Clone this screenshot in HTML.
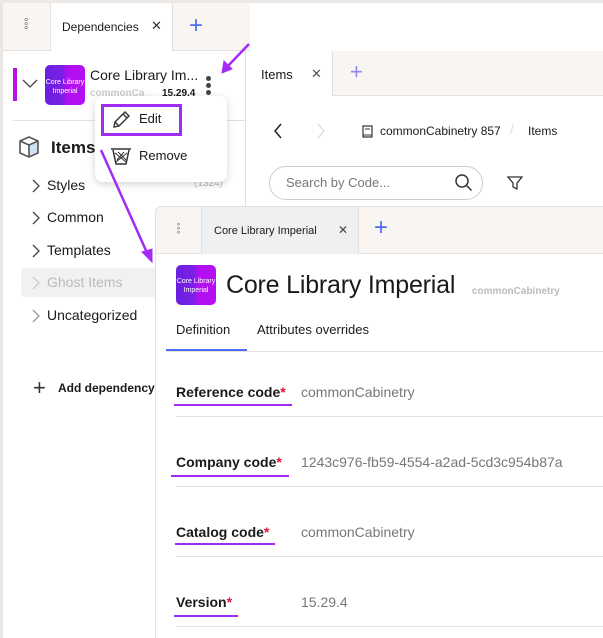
<!DOCTYPE html>
<html><head><style>
*{box-sizing:border-box;margin:0;padding:0}
body{width:603px;height:638px;overflow:hidden;background:#fff;font-family:"Liberation Sans",sans-serif;color:#1a1a1a;position:relative}
.a{position:absolute}
.tabbar{background:#f8f5f2;border-bottom:1px solid #e6dfda}
</style></head><body>
<div class="a" style="left:0;top:0;width:603px;height:3px;background:#ebe8e6"></div>
<div class="a tabbar" style="left:0;top:3px;width:250px;height:48px"></div>
<div class="a" style="left:0;top:3px;width:3px;height:635px;background:#e9e6e4"></div>
<div class="a" style="left:23px;top:19px;font-size:10px;line-height:4px;color:#666">∘<br>∘<br>∘</div>
<div class="a" style="left:50px;top:3px;width:123px;height:48px;background:#fff;border-left:1px solid #e6dfda;border-right:1px solid #e6dfda"></div>
<div class="a" style="left:62px;top:20px;font-size:12px">Dependencies</div>
<div class="a" style="left:151px;top:18px;font-size:13px;color:#333">✕</div>
<div class="a" style="left:189px;top:12px;font-size:24px;color:#4f6cf5;font-weight:300">+</div>
<div class="a" style="left:13px;top:68px;width:4px;height:33px;background:#b513e8"></div>
<svg class="a" style="left:22px;top:79px" width="16" height="10"><path d="M1 1l7 7 7-7" fill="none" stroke="#444" stroke-width="1.3"/></svg>
<div class="a" style="left:45px;top:65px;width:40px;height:40px;border-radius:5px;background:linear-gradient(90deg,#6a1fe0 0%,#7b20e6 45%,#b10ef2 55%,#b511f0 100%);color:#fff;font-size:7px;text-align:center;padding-top:13px;line-height:9px">Core Library<br>Imperial</div>
<div class="a" style="left:90px;top:67px;font-size:14px">Core Library Im...</div>
<div class="a" style="left:90px;top:88px;font-size:10px;color:#ccc;font-weight:bold">commonCa</div>
<div class="a" style="left:162px;top:88px;font-size:10px;font-weight:bold">15.29.4</div>
<div class="a" style="left:206px;top:76px;width:5px;height:5px;border-radius:50%;background:#444"></div>
<div class="a" style="left:206px;top:83px;width:5px;height:5px;border-radius:50%;background:#444"></div>
<div class="a" style="left:206px;top:90px;width:5px;height:5px;border-radius:50%;background:#444"></div>
<div class="a" style="left:13px;top:120px;width:232px;height:1px;background:#e6dfda"></div>
<svg class="a" style="left:17px;top:135px" width="24" height="24"><path d="M12 10l9-4v12l-9 4z" fill="#cfe2f3"/><path d="M3 6l9-4 9 4v12l-9 4-9-4z" fill="none" stroke="#555" stroke-width="1.6"/><path d="M12 10l9-4M12 10v12M12 10L3 6" fill="none" stroke="#555" stroke-width="1.6"/></svg>
<div class="a" style="left:51px;top:138px;font-size:17px;font-weight:bold">Items</div>
<div class="a" style="left:194px;top:178px;font-size:10px;color:#bbb">(1324)</div>
<div style="font-size:14px">
<div class="a" style="left:47px;top:177px">Styles</div>
<div class="a" style="left:47px;top:209px">Common</div>
<div class="a" style="left:47px;top:242px">Templates</div>
<div class="a" style="left:21px;top:268px;width:140px;height:29px;background:#f2f1f0;border-radius:4px"></div>
<div class="a" style="left:47px;top:274px;color:#bbb">Ghost Items</div>
<div class="a" style="left:47px;top:307px">Uncategorized</div>
</div>
<svg class="a" style="left:31px;top:178px" width="10" height="150"><g fill="none" stroke="#444" stroke-width="1.3"><path d="M2 2l6 6-6 6"/><path d="M2 34l6 6-6 6"/><path d="M2 67l6 6-6 6"/><path d="M2 99l6 6-6 6" stroke="#ccc"/><path d="M2 132l6 6-6 6" stroke="#999"/></g></svg>
<div class="a" style="left:33px;top:375px;font-size:22px;font-weight:300;color:#333">+</div>
<div class="a" style="left:58px;top:381px;font-size:12px;font-weight:bold">Add dependency</div>
<div class="a" style="left:245px;top:51px;width:1px;height:160px;background:#e6dfda"></div>
<div class="a tabbar" style="left:246px;top:51px;width:357px;height:45px"></div>
<div class="a" style="left:246px;top:51px;width:87px;height:45px;background:#fff;border-right:1px solid #e6dfda"></div>
<div class="a" style="left:261px;top:67px;font-size:13px">Items</div>
<div class="a" style="left:311px;top:66px;font-size:13px;color:#555">✕</div>
<div class="a" style="left:350px;top:59px;font-size:22px;color:#8f86f0;font-weight:300">+</div>
<svg class="a" style="left:273px;top:123px" width="60" height="16"><path d="M8 1L2 8l6 7" fill="none" stroke="#222" stroke-width="1.5"/><path d="M45 1l6 7-6 7" fill="none" stroke="#ddd" stroke-width="1.5"/></svg>
<svg class="a" style="left:362px;top:125px" width="11" height="13"><rect x="1" y="1" width="9" height="11" fill="none" stroke="#333" stroke-width="1.2"/><path d="M3 4h5M1 10h9" stroke="#333"/></svg>
<div class="a" style="left:380px;top:124px;font-size:12px;width:130px;white-space:nowrap;overflow:hidden">commonCabinetry 857</div>
<div class="a" style="left:510px;top:121px;font-size:14px;color:#e6dfda">/</div>
<div class="a" style="left:528px;top:124px;font-size:12px">Items</div>
<div class="a" style="left:269px;top:166px;width:214px;height:34px;border:1px solid #ccc;border-radius:17px"></div>
<div class="a" style="left:286px;top:175px;font-size:13px;color:#777">Search by Code...</div>
<svg class="a" style="left:454px;top:173px" width="20" height="20"><circle cx="8" cy="8" r="6" fill="none" stroke="#333" stroke-width="1.5"/><path d="M12.5 12.5l5 5" stroke="#333" stroke-width="1.5"/></svg>
<svg class="a" style="left:507px;top:175px" width="16" height="16"><path d="M1 2h14l-5 6v6l-4-2V8z" fill="none" stroke="#333" stroke-width="1.3"/></svg>
<div class="a" style="left:155px;top:206px;width:448px;height:432px;background:#fff;border:1px solid #e6dfda;border-right:none;border-bottom:none;border-radius:6px 0 0 0"></div>
<div class="a tabbar" style="left:156px;top:207px;width:447px;height:47px;border-radius:6px 0 0 0"></div>
<div class="a" style="left:176px;top:223px;font-size:8px;line-height:4px;color:#666">∘<br>∘<br>∘</div>
<div class="a" style="left:201px;top:207px;width:158px;height:47px;background:#eff0f2;border-left:1px solid #e6dfda;border-right:1px solid #e6dfda"></div>
<div class="a" style="left:214px;top:225px;font-size:11px">Core Library Imperial</div>
<div class="a" style="left:338px;top:223px;font-size:12px;color:#444">✕</div>
<div class="a" style="left:374px;top:214px;font-size:24px;color:#4f6cf5;font-weight:300">+</div>
<div class="a" style="left:176px;top:265px;width:40px;height:40px;border-radius:5px;background:linear-gradient(90deg,#6a1fe0 0%,#7b20e6 45%,#b10ef2 55%,#b511f0 100%);color:#fff;font-size:7px;text-align:center;padding-top:12px;line-height:9px">Core Library<br>Imperial</div>
<div class="a" style="left:226px;top:271px;font-size:25px;letter-spacing:-0.2px">Core Library Imperial</div>
<div class="a" style="left:472px;top:286px;font-size:10px;color:#bbb;font-weight:bold">commonCabinetry</div>
<div class="a" style="left:176px;top:322px;font-size:13px">Definition</div>
<div class="a" style="left:257px;top:322px;font-size:13px">Attributes overrides</div>
<div class="a" style="left:166px;top:349px;width:81px;height:2px;background:#4f6cf5"></div>
<div class="a" style="left:166px;top:351px;width:437px;height:1px;background:#e6dfda"></div>
<div style="font-size:14px">
<div class="a" style="left:176px;top:384px;font-weight:bold">Reference code<span style="color:#e0103a">*</span></div>
<div class="a" style="left:301px;top:384px;color:#777">commonCabinetry</div>
<div class="a" style="left:174px;top:404px;width:118px;height:2px;background:#a12cf0"></div>
<div class="a" style="left:176px;top:416px;width:427px;height:1px;background:#e6dfda"></div>
<div class="a" style="left:176px;top:454px;font-weight:bold">Company code<span style="color:#e0103a">*</span></div>
<div class="a" style="left:301px;top:454px;color:#777">1243c976-fb59-4554-a2ad-5cd3c954b87a</div>
<div class="a" style="left:171px;top:475px;width:118px;height:2px;background:#a12cf0"></div>
<div class="a" style="left:176px;top:486px;width:427px;height:1px;background:#e6dfda"></div>
<div class="a" style="left:176px;top:524px;font-weight:bold">Catalog code<span style="color:#e0103a">*</span></div>
<div class="a" style="left:301px;top:524px;color:#777">commonCabinetry</div>
<div class="a" style="left:175px;top:543px;width:100px;height:2px;background:#a12cf0"></div>
<div class="a" style="left:176px;top:556px;width:427px;height:1px;background:#e6dfda"></div>
<div class="a" style="left:176px;top:594px;font-weight:bold">Version<span style="color:#e0103a">*</span></div>
<div class="a" style="left:301px;top:594px;color:#777">15.29.4</div>
<div class="a" style="left:174px;top:615px;width:64px;height:2px;background:#a12cf0"></div>
<div class="a" style="left:176px;top:626px;width:427px;height:1px;background:#e6dfda"></div>
</div>
<div class="a" style="left:95px;top:96px;width:132px;height:86px;background:#fff;border-radius:8px;box-shadow:0 2px 8px rgba(0,0,0,.18)"></div>
<div class="a" style="left:101px;top:104px;width:81px;height:32px;border:3px solid #a12cf0"></div>
<svg class="a" style="left:110px;top:109px" width="22" height="22"><path d="M4 18l1-5L15 3l4 4L9 17z M13 5l4 4 M5 13l4 4" fill="none" stroke="#333" stroke-width="1.4"/></svg>
<div class="a" style="left:139px;top:111px;font-size:13px">Edit</div>
<svg class="a" style="left:110px;top:146px" width="22" height="20"><path d="M1 3h20M3 4l3 14h10l3-14" fill="none" stroke="#333" stroke-width="1.5"/><path d="M5 7l11 9M17 7L6 16M8 6l8 8M14 6l-7 8" stroke="#333" stroke-width="1"/></svg>
<div class="a" style="left:139px;top:148px;font-size:13px">Remove</div>
<svg class="a" style="left:0;top:0" width="603" height="638"><g stroke="#a22cf5" stroke-width="2.5" fill="#a22cf5"><path d="M249 44L226 68"/><path d="M222 73l2-12 8 8z" stroke-width="1"/><path d="M101 150L148 255"/><path d="M152 262l-10-10 10-3z" stroke-width="1"/></g></svg>
</body></html>
